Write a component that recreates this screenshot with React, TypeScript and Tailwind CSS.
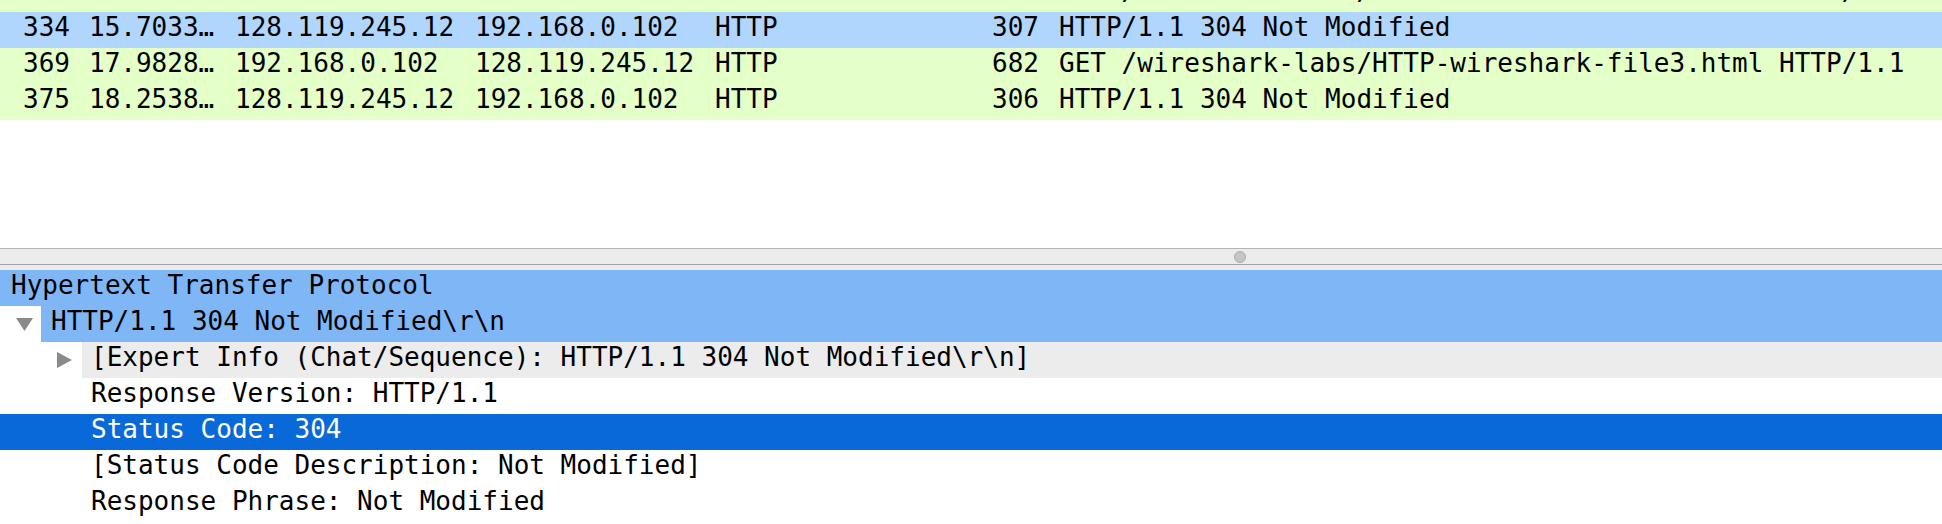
import React from "react";

interface Packet {
  no: string;
  time: string;
  src: string;
  dst: string;
  proto: string;
  len: string;
  info: string;
  bg: string;
}

const packets: Packet[] = [
  {
    no: "334",
    time: "15.7033…",
    src: "128.119.245.12",
    dst: "192.168.0.102",
    proto: "HTTP",
    len: "307",
    info: "HTTP/1.1 304 Not Modified",
    bg: "bg-[#b1d6fd]",
  },
  {
    no: "369",
    time: "17.9828…",
    src: "192.168.0.102",
    dst: "128.119.245.12",
    proto: "HTTP",
    len: "682",
    info: "GET /wireshark-labs/HTTP-wireshark-file3.html HTTP/1.1",
    bg: "bg-[#e4ffc7]",
  },
  {
    no: "375",
    time: "18.2538…",
    src: "128.119.245.12",
    dst: "192.168.0.102",
    proto: "HTTP",
    len: "306",
    info: "HTTP/1.1 304 Not Modified",
    bg: "bg-[#e4ffc7]",
  },
];

// row scrolled almost out of view at the top
const partial: Packet = {
  no: "332",
  time: "15.4608…",
  src: "192.168.0.102",
  dst: "128.119.245.12",
  proto: "HTTP",
  len: "682",
  info: "GET /wireshark-labs/HTTP-wireshark-file3.html HTTP/1.1",
  bg: "bg-[#e4ffc7]",
};

interface Node {
  label: string;
  level: number;
  arrow?: "down" | "right";
  bg?: string;
  full?: boolean;
  text?: string;
}

const tree: Node[] = [
  { label: "Hypertext Transfer Protocol", level: 0, bg: "bg-[#7fb6f6]" },
  { label: "HTTP/1.1 304 Not Modified\\r\\n", level: 1, arrow: "down", bg: "bg-[#7fb6f6]" },
  { label: "[Expert Info (Chat/Sequence): HTTP/1.1 304 Not Modified\\r\\n]", level: 2, arrow: "right", bg: "bg-[#ececec]" },
  { label: "Response Version: HTTP/1.1", level: 2 },
  { label: "Status Code: 304", level: 2, bg: "bg-[#0a69d9]", full: true, text: "text-white" },
  { label: "[Status Code Description: Not Modified]", level: 2 },
  { label: "Response Phrase: Not Modified", level: 2 },
];

function PacketRow({ p }: { p: Packet }) {
  return (
    <div className={`flex h-[36px] leading-[30px] whitespace-nowrap text-black ${p.bg}`}>
      <div className="w-[80px] shrink-0 pr-[10px] text-right">{p.no}</div>
      <div className="w-[145px] shrink-0 pl-[9px]">{p.time}</div>
      <div className="w-[240px] shrink-0 pl-[10px]">{p.src}</div>
      <div className="w-[240px] shrink-0 pl-[10px]">{p.dst}</div>
      <div className="w-[200px] shrink-0 pl-[10px]">{p.proto}</div>
      <div className="w-[144px] shrink-0 pr-[10px] text-right">{p.len}</div>
      <div className="flex-1 pl-[10px]">{p.info}</div>
    </div>
  );
}

function Arrow({ dir }: { dir: "down" | "right" }) {
  if (dir === "down") {
    return (
      <svg width="17" height="13" viewBox="0 0 17 13" className="ml-[16px]">
        <polygon points="0,0 17,0 8.5,13" fill="#8a8a8a" />
      </svg>
    );
  }
  return (
    <svg width="15" height="16" viewBox="0 0 15 16" className="ml-[16px]">
      <polygon points="0,0 15,8 0,16" fill="#8a8a8a" />
    </svg>
  );
}

function TreeRow({ n }: { n: Node }) {
  return (
    <div className={`flex h-[36px] leading-[30px] whitespace-nowrap ${n.full ? n.bg : ""}`}>
      {n.level > 0 && (
        <div className="flex shrink-0" style={{ width: n.level * 41 }}>
          <div className="w-[41px] shrink-0" style={{ marginLeft: (n.level - 1) * 41 }}>
            {n.arrow && (
              <div className="flex h-[36px] items-center">
                <Arrow dir={n.arrow} />
              </div>
            )}
          </div>
        </div>
      )}
      <div
        className={`flex-1 ${n.level === 0 ? "pl-[11px]" : n.level === 1 ? "pl-[10px]" : "pl-[9px]"} ${
          n.full ? "" : n.bg ?? ""
        } ${n.text ?? "text-black"}`}
      >
        {n.label}
      </div>
    </div>
  );
}

export default function App() {
  return (
    <div className="w-[1942px] h-[524px] overflow-hidden bg-white font-['DejaVu_Sans_Mono',Menlo,monospace] text-[26px]">
      {/* packet list */}
      <div className="h-[248px] overflow-hidden bg-white">
        <div className="h-[12px] overflow-hidden">
          <div className="mt-[-24px]">
            <PacketRow p={partial} />
          </div>
        </div>
        {packets.map(p => (
          <PacketRow key={p.no} p={p} />
        ))}
      </div>

      {/* splitter */}
      <div className="h-[1px] bg-[#b4b4b4]" />
      <div className="flex h-[15px] items-center bg-[#ececec]">
        <div className="ml-[1234px] h-[12px] w-[12px] rounded-full border border-[#ababab] bg-[#c6c6c6]" />
      </div>
      <div className="h-[1px] bg-[#a2a2a2]" />
      <div className="h-[5px] bg-[#ececec]" />

      {/* packet details */}
      <div className="bg-white">
        {tree.map(n => (
          <TreeRow key={n.label} n={n} />
        ))}
      </div>
    </div>
  );
}
